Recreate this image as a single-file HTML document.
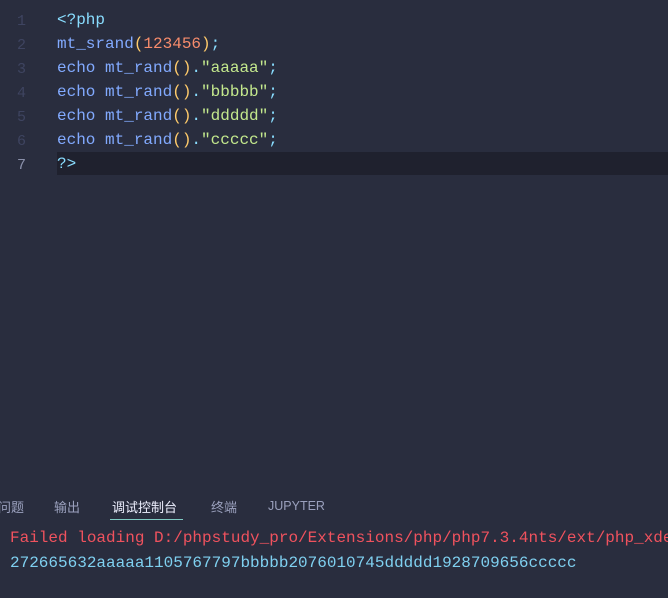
<!DOCTYPE html>
<html><head><meta charset="utf-8"><style>
html,body{margin:0;padding:0;}
body{width:668px;height:598px;background:#292d3e;overflow:hidden;position:relative;font-family:"Liberation Mono",monospace;}
.ln{position:absolute;left:0;width:26px;text-align:right;font-size:15px;color:#3e4460;}
.code{position:absolute;left:57px;font-size:16px;white-space:pre;color:#82aaff;line-height:24px;}
.k{color:#82aaff}.c{color:#89ddff}.n{color:#f78c6c}.p{color:#ffcb6b}.s{color:#c3e88d}
.hl{position:absolute;left:57px;right:0;top:152px;height:23px;background:#1f212e;}
.tabs{position:absolute;top:497px;font-family:"Liberation Sans","Noto Sans CJK SC",sans-serif;font-size:13px;color:#9aa0bd;}
.out{position:absolute;left:10px;width:658px;overflow:hidden;font-size:16px;white-space:pre;}
</style></head><body>
<div class="hl"></div>
<div class="ln" style="top:10px;line-height:24px">1<br>2<br>3<br>4<br>5<br>6<br><span style="color:#8a90aa">7</span></div>
<div class="code" style="top:8px"><span class="c">&lt;?</span><span class="c">php</span>
<span class="k">mt_srand</span><span class="p">(</span><span class="n">123456</span><span class="p">)</span><span class="c">;</span>
echo mt_rand<span class="p">()</span><span class="c">.</span><span class="s">"aaaaa"</span><span class="c">;</span>
echo mt_rand<span class="p">()</span><span class="c">.</span><span class="s">"bbbbb"</span><span class="c">;</span>
echo mt_rand<span class="p">()</span><span class="c">.</span><span class="s">"ddddd"</span><span class="c">;</span>
echo mt_rand<span class="p">()</span><span class="c">.</span><span class="s">"ccccc"</span><span class="c">;</span>
<span class="c">?&gt;</span></div>
<div class="tabs" style="left:-2px">问题</div>
<div class="tabs" style="left:54px">输出</div>
<div class="tabs" style="left:112px;color:#eef0ff">调试控制台</div>
<div style="position:absolute;left:110px;top:519px;width:73px;height:1px;background:#80cbc4"></div>
<div class="tabs" style="left:211px">终端</div>
<div class="tabs" style="left:268px;top:499px;font-size:12.5px">JUPYTER</div>
<div class="out" style="top:529px;color:#f0525e">Failed loading D:/phpstudy_pro/Extensions/php/php7.3.4nts/ext/php_xdebug.dll</div>
<div class="out" style="top:554px;color:#7fd0f0">272665632aaaaa1105767797bbbbb2076010745ddddd1928709656ccccc</div>
</body></html>
